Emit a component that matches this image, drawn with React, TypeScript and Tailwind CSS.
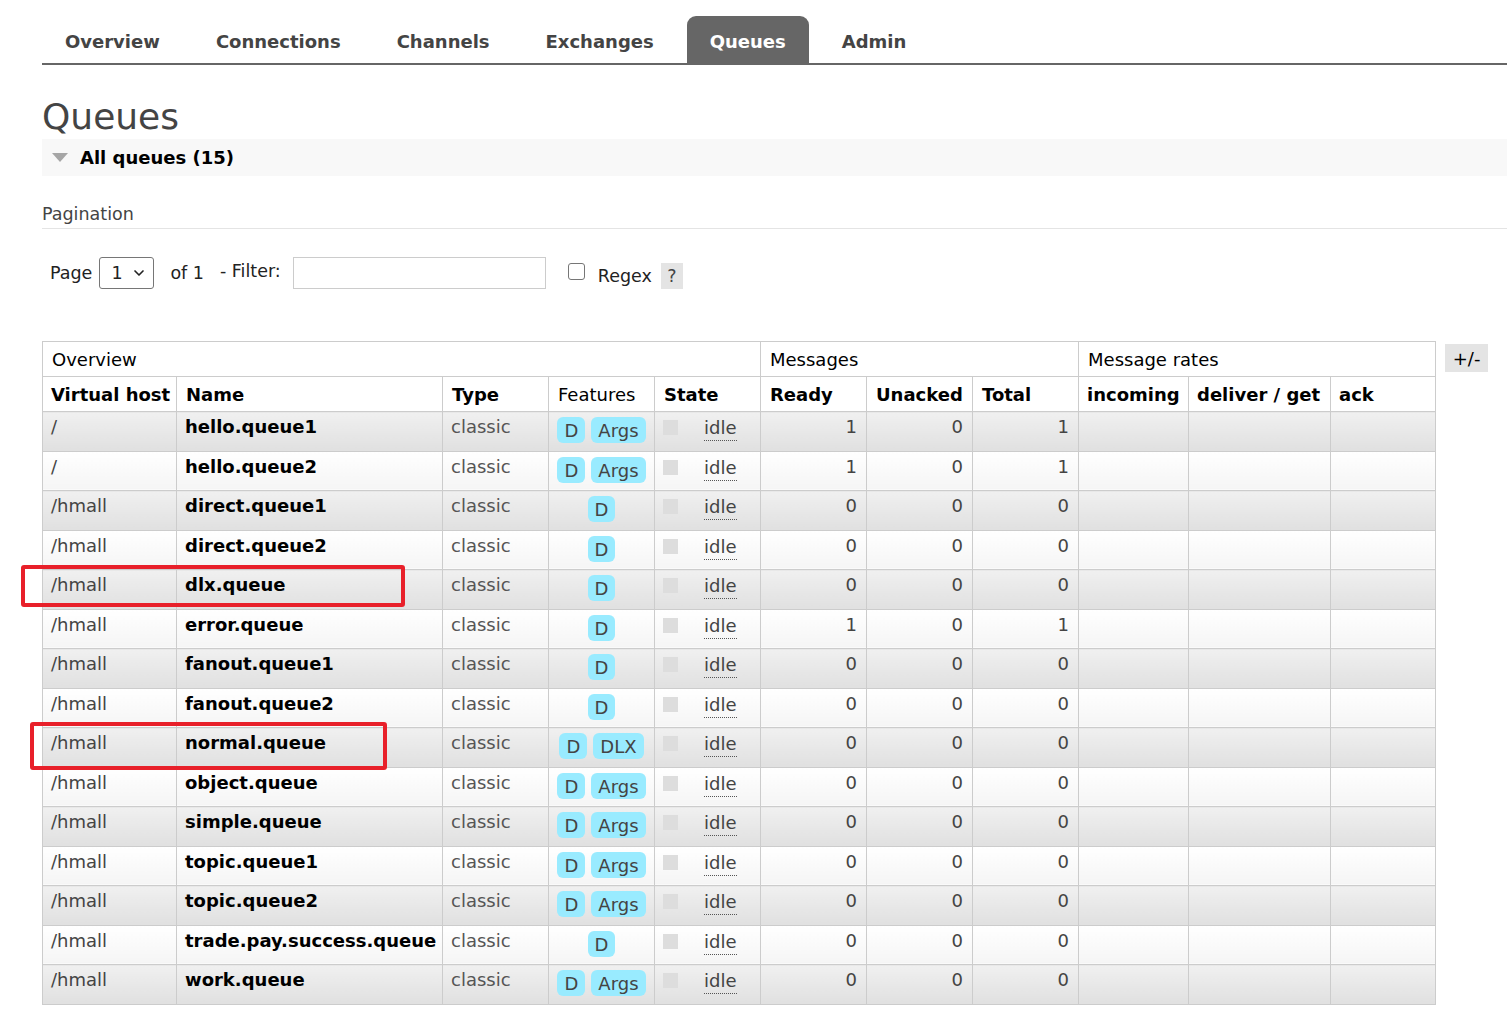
import { ChevronDown } from 'lucide-react';

type Row = {
  vhost: string;
  name: string;
  features: string[];
  ready: number;
  unacked: number;
  total: number;
};

const rows: Row[] = [
  { vhost: '/', name: 'hello.queue1', features: ['D', 'Args'], ready: 1, unacked: 0, total: 1 },
  { vhost: '/', name: 'hello.queue2', features: ['D', 'Args'], ready: 1, unacked: 0, total: 1 },
  { vhost: '/hmall', name: 'direct.queue1', features: ['D'], ready: 0, unacked: 0, total: 0 },
  { vhost: '/hmall', name: 'direct.queue2', features: ['D'], ready: 0, unacked: 0, total: 0 },
  { vhost: '/hmall', name: 'dlx.queue', features: ['D'], ready: 0, unacked: 0, total: 0 },
  { vhost: '/hmall', name: 'error.queue', features: ['D'], ready: 1, unacked: 0, total: 1 },
  { vhost: '/hmall', name: 'fanout.queue1', features: ['D'], ready: 0, unacked: 0, total: 0 },
  { vhost: '/hmall', name: 'fanout.queue2', features: ['D'], ready: 0, unacked: 0, total: 0 },
  { vhost: '/hmall', name: 'normal.queue', features: ['D', 'DLX'], ready: 0, unacked: 0, total: 0 },
  { vhost: '/hmall', name: 'object.queue', features: ['D', 'Args'], ready: 0, unacked: 0, total: 0 },
  { vhost: '/hmall', name: 'simple.queue', features: ['D', 'Args'], ready: 0, unacked: 0, total: 0 },
  { vhost: '/hmall', name: 'topic.queue1', features: ['D', 'Args'], ready: 0, unacked: 0, total: 0 },
  { vhost: '/hmall', name: 'topic.queue2', features: ['D', 'Args'], ready: 0, unacked: 0, total: 0 },
  { vhost: '/hmall', name: 'trade.pay.success.queue', features: ['D'], ready: 0, unacked: 0, total: 0 },
  { vhost: '/hmall', name: 'work.queue', features: ['D', 'Args'], ready: 0, unacked: 0, total: 0 },
];

const tabs = ['Overview', 'Connections', 'Channels', 'Exchanges', 'Queues', 'Admin'];

export default function App() {
  return (
    <div
      className="relative min-h-[1023px] w-[1507px] overflow-hidden bg-white pl-[42px] text-[18px] text-[#444]"
      style={{ fontFamily: '"DejaVu Sans", Verdana, sans-serif' }}
    >
      {/* Tabs */}
      <div className="flex h-[65px] items-end gap-[10px] border-b-2 border-[#666]">
        {tabs.map((t) => (
          <div
            key={t}
            className={
              t === 'Queues'
                ? 'flex h-[47px] items-center rounded-t-[9px] bg-[#666] px-[23px] pt-[3px] font-bold text-white'
                : 'flex h-[47px] items-center px-[23px] pt-[3px] font-bold text-[#444]'
            }
          >
            {t}
          </div>
        ))}
      </div>

      {/* Heading */}
      <h1 className="mt-[31px] h-[43px] text-[36px] leading-[42px] text-[#444]">Queues</h1>

      <div className="flex h-[37px] items-center bg-[#f8f8f8] pl-[10px]">
        <svg width="16" height="10" viewBox="0 0 16 10" className="mt-[1px]">
          <polygon points="0,0 16,0 8,9" fill="#a6a6a6" />
        </svg>
        <span className="ml-[12px] font-bold text-black">All queues (15)</span>
      </div>

      {/* Pagination */}
      <div className="mt-[27px] border-b border-[#e4e4e4] pb-[3px] text-[17.5px] leading-[22px] text-[#444]">
        Pagination
      </div>

      <div className="mt-[28px] flex items-center text-[17.5px] text-[#222]">
        <span className="ml-[8px]">Page</span>
        <div className="ml-[7px] flex h-[32px] w-[55px] items-center justify-between rounded-[3px] border border-[#767676] pl-[11px] pr-[6px]">
          <span>1</span>
          <ChevronDown size={16} strokeWidth={2.5} className="text-[#222]" />
        </div>
        <span className="ml-[16px]">of 1</span>
        <span className="ml-[16px] -mt-[4px]">- Filter:</span>
        <div className="ml-[12px] h-[32px] w-[253px] border border-[#ccc]" />
        <div className="ml-[22px] h-[17px] w-[17px] -translate-y-[2px] rounded-[3px] border border-[#767676]" />
        <span className="ml-[13px] mt-[6px]">Regex</span>
        <span className="ml-[9px] mt-[6px] flex h-[26px] w-[22px] items-center justify-center bg-[#e4e4e4] text-[#444]">
          ?
        </span>
      </div>

      {/* Table */}
      <div className="mt-[52px] flex items-start">
        <table className="w-[1393px] table-fixed border-collapse border border-[#ccc] whitespace-nowrap">
          <colgroup>
            <col className="w-[134px]" />
            <col className="w-[266px]" />
            <col className="w-[106px]" />
            <col className="w-[106px]" />
            <col className="w-[106px]" />
            <col className="w-[106px]" />
            <col className="w-[106px]" />
            <col className="w-[106px]" />
            <col className="w-[110px]" />
            <col className="w-[142px]" />
            <col className="w-[105px]" />
          </colgroup>
          <thead>
            <tr className="h-[35px]">
              <th colSpan={5} className="border border-[#ccc] px-[9px] text-left font-normal text-black">
                Overview
              </th>
              <th colSpan={3} className="border border-[#ccc] px-[9px] text-left font-normal text-black">
                Messages
              </th>
              <th colSpan={3} className="border border-[#ccc] px-[9px] text-left font-normal text-black">
                Message rates
              </th>
            </tr>
            <tr className="h-[35px]">
              <th className="overflow-hidden border border-[#ccc] px-[8px] text-left font-bold text-black">Virtual host</th>
              <th className="border border-[#ccc] px-[9px] text-left font-bold text-black">Name</th>
              <th className="border border-[#ccc] px-[9px] text-left font-bold text-black">Type</th>
              <th className="border border-[#ccc] px-[9px] text-left font-normal text-black">Features</th>
              <th className="border border-[#ccc] px-[9px] text-left font-bold text-black">State</th>
              <th className="border border-[#ccc] px-[9px] text-left font-bold text-black">Ready</th>
              <th className="border border-[#ccc] px-[9px] text-left font-bold text-black">Unacked</th>
              <th className="border border-[#ccc] px-[9px] text-left font-bold text-black">Total</th>
              <th className="border border-[#ccc] px-[8px] text-left font-bold text-black">incoming</th>
              <th className="border border-[#ccc] px-[8px] text-left font-bold text-black">deliver / get</th>
              <th className="border border-[#ccc] px-[8px] text-left font-bold text-black">ack</th>
            </tr>
          </thead>
          <tbody>
            {rows.map((r, i) => {
              const bg =
                i % 2 === 0
                  ? 'bg-linear-to-b from-[#f0f0f0] to-[#e0e0e0]'
                  : 'bg-linear-to-b from-white to-[#f5f5f5]';
              const td = `border border-[#ccc] ${bg} align-top pt-[4px] leading-[22px]`;
              return (
                <tr key={r.name} className="h-[39.5px]">
                  <td className={`${td} px-[8px] text-[#444]`}>{r.vhost}</td>
                  <td className={`${td} px-[8px] font-bold text-black`}>{r.name}</td>
                  <td className={`${td} px-[8px] text-[#555]`}>classic</td>
                  <td className={`${td} px-[4px] pt-[3px]`}>
                    <div className="flex justify-center gap-[6px]">
                      {r.features.map((f) => (
                        <span
                          key={f}
                          className="mt-[1px] flex h-[26px] items-center rounded-[6px] bg-[#99ebff] px-[7px] pt-[2px] text-[#444]"
                        >
                          {f}
                        </span>
                      ))}
                    </div>
                  </td>
                  <td className={`${td} px-[8px]`}>
                    <div className="flex items-start">
                      <span className="mt-[4px] h-[15px] w-[15px] bg-[#dddddd]" />
                      <span className="ml-[26px] border-b border-dotted border-[#555] leading-[24px] text-[#444]">
                        idle
                      </span>
                    </div>
                  </td>
                  <td className={`${td} px-[9px] text-right`}>{r.ready}</td>
                  <td className={`${td} px-[9px] text-right`}>{r.unacked}</td>
                  <td className={`${td} px-[9px] text-right`}>{r.total}</td>
                  <td className={td} />
                  <td className={td} />
                  <td className={td} />
                </tr>
              );
            })}
          </tbody>
        </table>
        <div className="ml-[9px] mt-[3px] flex h-[28px] w-[43px] items-center justify-center bg-[#e4e4e4] text-black">
          +/-
        </div>
      </div>

      {/* Annotation boxes */}
      <div className="absolute left-[21px] top-[565px] h-[42px] w-[384px] rounded-[3px] border-4 border-[#e8202a]" />
      <div className="absolute left-[30px] top-[722px] h-[48px] w-[357px] rounded-[3px] border-4 border-[#e8202a]" />
    </div>
  );
}
